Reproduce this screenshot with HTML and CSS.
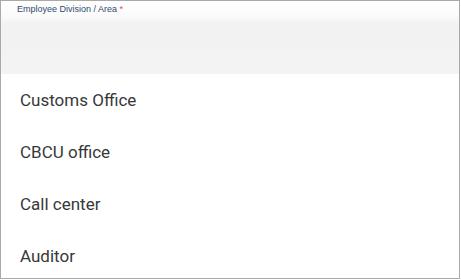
FILE: index.html
```html
<!DOCTYPE html>
<html>
<head>
<meta charset="utf-8">
<link rel="stylesheet" href="styles.css">
</head>
<body>
<div class="frame">
  <div class="field">
    <label class="label">Employee Division / Area <span class="req">*</span></label>
    <div class="input"></div>
  </div>
  <ul class="options">
    <li class="option">Customs Office</li>
    <li class="option">CBCU office</li>
    <li class="option">Call center</li>
    <li class="option">Auditor</li>
  </ul>
</div>
</body>
</html>
```
FILE: styles.css
```css
html, body {
  margin: 0;
  padding: 0;
  background: #ffffff;
}
.frame {
  width: 458px;
  height: 277px;
  border: 1px solid #a9a9a9;
  overflow: hidden;
  background: #ffffff;
}
.field {
  display: flex;
  flex-direction: column;
}
.label {
  display: block;
  height: 17px;
  padding-left: 16px;
  font-family: "Liberation Sans", Arial, sans-serif;
  font-size: 9px;
  line-height: 16px;
  color: #2f4b6e;
  background: linear-gradient(#ffffff, #fafafa);
}
.req {
  color: #e0474c;
}
.input {
  height: 56px;
  background: linear-gradient(#f8f8f8 0, #f2f2f2 6px, #f3f3f3 100%);
}
.options {
  list-style: none;
  margin: 0;
  padding: 0;
}
.option {
  height: 52px;
  display: flex;
  align-items: center;
  padding-left: 19px;
  font-family: Roboto, "Noto Sans", sans-serif;
  font-size: 17px;
  color: #383838;
}
```
